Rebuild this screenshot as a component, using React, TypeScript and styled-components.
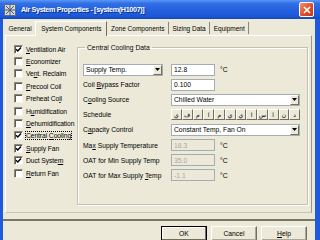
import React from "react";
import styled, { createGlobalStyle } from "styled-components";

const GlobalStyle = createGlobalStyle`
  html, body {
    margin: 0;
    padding: 0;
    background: #ece9d8;
  }
  body {
    font-family: "Liberation Sans", Arial, sans-serif;
    font-size: 6.75px;
    color: #000;
  }
`;

const checks = [
  { label: <><u>V</u>entilation Air</>, on: true },
  { label: <><u>E</u>conomizer</>, on: false },
  { label: <>Ve<u>n</u>t. Reclaim</>, on: false },
  { label: <><u>P</u>recool Coil</>, on: false },
  { label: <>Preheat Co<u>i</u>l</>, on: false },
  { label: <>H<u>u</u>midification</>, on: false },
  { label: <><u>D</u>ehumidification</>, on: false },
  { label: <>Central <u>C</u>ooling</>, on: true, focus: true },
  { label: <><u>S</u>upply Fan</>, on: true },
  { label: <>Duct Syste<u>m</u></>, on: true },
  { label: <><u>R</u>eturn Fan</>, on: false },
];

const months = ["ي", "ف", "م", "ا", "م", "ي", "ي", "ا", "س", "ا", "ن", "د"];

const tabs = ["General", "System Components", "Zone Components", "Sizing Data", "Equipment"];
const activeTab = 1;

const Arrow = () => (
  <svg width="5" height="3" viewBox="0 0 5 3">
    <path d="M0 0 H5 L2.5 3 Z" fill="#000" />
  </svg>
);

const Tick = () => (
  <svg width="7" height="7" viewBox="0 0 7 7">
    <path d="M1 3.2 L2.8 5 L6 1.6" stroke="#000" strokeWidth="1.4" fill="none" />
  </svg>
);

const AppIcon = () => (
  <svg width="12" height="12" viewBox="0 0 12 12">
    <rect x="0.5" y="0.5" width="11" height="11" fill="#d8d8d8" stroke="#5a6a8a" />
    <path d="M2 2 L10 10 M10 2 L2 10 M6 1 V11 M1 6 H11" stroke="#4a5a7a" strokeWidth="1" />
  </svg>
);

const Select = ({ value, width }: { value: string; width: number }) => (
  <SelectBox $w={width}>
    <span>{value}</span>
    <ArrowButton><Arrow /></ArrowButton>
  </SelectBox>
);

export default function App() {
  return (
    <>
      <GlobalStyle />
      <Window>
        <TitleBar>
          <AppIcon />
          <Title>Air System Properties - [system(H1007)]</Title>
          <CloseButton>
            <svg width="8" height="8" viewBox="0 0 8 8">
              <path d="M1 1 L7 7 M7 1 L1 7" stroke="#fff" strokeWidth="1.6" />
            </svg>
          </CloseButton>
        </TitleBar>
        <Body>
          <TabStrip>
            {tabs.map((t, i) => (
              <Tab key={t} $active={i === activeTab} $sep={i !== activeTab - 1}>{t}</Tab>
            ))}
          </TabStrip>
          <Panel>
            <CheckList>
              {checks.map((c, i) => (
                <CheckRow key={i}>
                  <CheckBox>{c.on && <Tick />}</CheckBox>
                  <CheckLabel $focus={!!c.focus}>{c.label}</CheckLabel>
                </CheckRow>
              ))}
            </CheckList>
            <GroupBox>
              <Legend>Central Cooling Data</Legend>
              <FormGrid>
                <Select value="Supply Temp." width={80} />
                <Field>
                  <Input>12.8</Input>
                  <Unit>°C</Unit>
                </Field>

                <Label>Coil <u>B</u>ypass Factor</Label>
                <Field><Input>0.100</Input></Field>

                <Label>C<u>o</u>oling Source</Label>
                <Field><Select value="Chilled Water" width={129} /></Field>

                <Label>Schedule</Label>
                <Field>
                  <MonthRow>
                    {months.map((m, i) => <MonthButton key={i}>{m}</MonthButton>)}
                  </MonthRow>
                </Field>

                <Label>C<u>a</u>pacity Control</Label>
                <Field><Select value="Constant Temp, Fan On" width={129} /></Field>

                <Label>Ma<u>x</u> Supply Temperature</Label>
                <Field>
                  <Input $disabled>18.3</Input>
                  <Unit>°C</Unit>
                </Field>

                <Label>OAT for Min Supply Temp</Label>
                <Field>
                  <Input $disabled>35.0</Input>
                  <Unit>°C</Unit>
                </Field>

                <Label>OAT for Max Supply <u>T</u>emp</Label>
                <Field>
                  <Input $disabled>-1.1</Input>
                  <Unit>°C</Unit>
                </Field>
              </FormGrid>
            </GroupBox>
          </Panel>
          <Divider />
          <ButtonRow>
            <Button $default>OK</Button>
            <Button>Cancel</Button>
            <Button><u>H</u>elp</Button>
          </ButtonRow>
        </Body>
      </Window>
    </>
  );
}

const Window = styled.div`
  width: 320px;
  height: 240px;
  overflow: hidden;
  display: flex;
  flex-direction: column;
  background: #1d5ade;
`;

const TitleBar = styled.div`
  height: 19px;
  flex: none;
  display: flex;
  align-items: center;
  gap: 5px;
  padding: 0 6px 0 4px;
  background: linear-gradient(#5b97f7 0%, #3170e6 18%, #2260dd 55%, #1c58d6 85%, #1448bd 100%);
`;

const Title = styled.div`
  flex: 1;
  color: #fff;
  font-weight: bold;
  font-size: 7.2px;
  letter-spacing: -0.35px;
  text-shadow: 1px 1px 0 #0c2f8a;
  white-space: nowrap;
`;

const CloseButton = styled.div`
  width: 13px;
  height: 13px;
  display: flex;
  align-items: center;
  justify-content: center;
  border: 1px solid #fff;
  border-radius: 2px;
  background: linear-gradient(135deg, #f09070, #dc4a22 60%, #c03a18);
`;

const Body = styled.div`
  flex: 1;
  display: flex;
  flex-direction: column;
  margin: 0 5px 0 3px;
  background: #ece9d8;
`;

const TabStrip = styled.div`
  height: 16px;
  display: flex;
  align-items: flex-end;
  padding-left: 2px;
  font-size: 6.5px;
`;

const Tab = styled.div<{ $active?: boolean; $sep?: boolean }>`
  height: ${(p) => (p.$active ? 15 : 12)}px;
  box-sizing: border-box;
  display: flex;
  align-items: center;
  padding: ${(p) => (p.$active ? "0 5px 2px" : "0 3.5px")};
  margin-bottom: ${(p) => (p.$active ? -1 : 1)}px;
  white-space: nowrap;
  background: #ece9d8;
  position: relative;
  z-index: ${(p) => (p.$active ? 1 : 0)};
  border-top: ${(p) => (p.$active ? "1px solid #fff" : "none")};
  border-left: ${(p) => (p.$active ? "1px solid #fff" : "none")};
  border-right: ${(p) => (p.$active ? "1px solid #716f64" : p.$sep ? "1px solid #8a877a" : "none")};
`;

const Panel = styled.div`
  height: 178px;
  box-sizing: border-box;
  display: grid;
  grid-template-columns: 71px 1fr;
  padding: 7px 3px 7px 0;
  margin: 0 3px 0 2px;
  border: 1px solid;
  border-color: #fff #9a978a #c8c4b4 #fff;
`;

const CheckList = styled.div`
  display: grid;
  grid-auto-rows: 12.4px;
  align-content: start;
  padding-left: 8px;
`;

const CheckRow = styled.div`
  display: flex;
  align-items: center;
  gap: 3px;
  white-space: nowrap;
`;

const CheckBox = styled.div`
  width: 9px;
  height: 9px;
  box-sizing: border-box;
  flex: none;
  display: flex;
  align-items: center;
  justify-content: center;
  background: #fff;
  border: 1px solid;
  border-color: #8c8a80 #f4f2ea #f4f2ea #8c8a80;
  box-shadow: inset 1px 1px 0 #5c5a52;
`;

const CheckLabel = styled.span<{ $focus?: boolean }>`
  letter-spacing: -0.1px;
  outline: ${(p) => (p.$focus ? "1px dotted #000" : "none")};
  outline-offset: 0;
`;

const GroupBox = styled.fieldset`
  margin: 0;
  padding: 10px 7px 0 5px;
  min-width: 0;
  border: 1px solid #c4c1b2;
  box-shadow: 1px 1px 0 #fff, inset 1px 1px 0 #fff;
`;

const Legend = styled.legend`
  padding: 0 2px;
  margin-left: 2px;
  line-height: 9px;
`;

const FormGrid = styled.div`
  display: grid;
  grid-template-columns: 88px 1fr;
  grid-auto-rows: 15.1px;
  align-items: center;
`;

const Label = styled.div`
  white-space: nowrap;
`;

const Field = styled.div`
  display: flex;
  align-items: center;
  gap: 5px;
`;

const Input = styled.div<{ $disabled?: boolean }>`
  width: 44px;
  height: 12px;
  box-sizing: border-box;
  display: flex;
  align-items: center;
  padding-left: 2px;
  border: 1px solid #a5acb2;
  background: ${(p) => (p.$disabled ? "#ece9d8" : "#fff")};
  color: ${(p) => (p.$disabled ? "#aca899" : "#000")};
`;

const Unit = styled.span``;

const SelectBox = styled.div<{ $w: number }>`
  width: ${(p) => p.$w}px;
  height: 12px;
  box-sizing: border-box;
  display: flex;
  align-items: center;
  justify-content: space-between;
  padding-left: 2px;
  border: 1px solid #a5acb2;
  background: #fff;
  white-space: nowrap;
`;

const ArrowButton = styled.div`
  width: 9px;
  height: 10px;
  box-sizing: border-box;
  display: flex;
  align-items: center;
  justify-content: center;
  background: #ece9d8;
  border: 1px solid;
  border-color: #fff #716f64 #716f64 #fff;
`;

const MonthRow = styled.div`
  width: 129px;
  height: 11px;
  display: grid;
  grid-template-columns: repeat(12, 1fr);
`;

const MonthButton = styled.div`
  box-sizing: border-box;
  display: flex;
  align-items: center;
  justify-content: center;
  font-family: "DejaVu Sans", sans-serif;
  font-size: 6px;
  background: #ece9d8;
  border: 1px solid;
  border-color: #fff #716f64 #716f64 #fff;
`;

const Divider = styled.div`
  height: 2px;
  margin-top: 6px;
  background: #7a776a;
`;

const ButtonRow = styled.div`
  display: flex;
  justify-content: flex-end;
  gap: 4px;
  padding: 5px 8px 0 0;
`;

const Button = styled.div<{ $default?: boolean }>`
  width: 46px;
  height: 15px;
  box-sizing: border-box;
  display: flex;
  align-items: center;
  justify-content: center;
  background: #ece9d8;
  border: 1px solid;
  border-color: ${(p) => (p.$default ? "#000" : "#fff #716f64 #716f64 #fff")};
  box-shadow: ${(p) => (p.$default ? "inset -1px -1px 0 #716f64, inset 1px 1px 0 #fff" : "inset -1px -1px 0 #aca899")};
`;
